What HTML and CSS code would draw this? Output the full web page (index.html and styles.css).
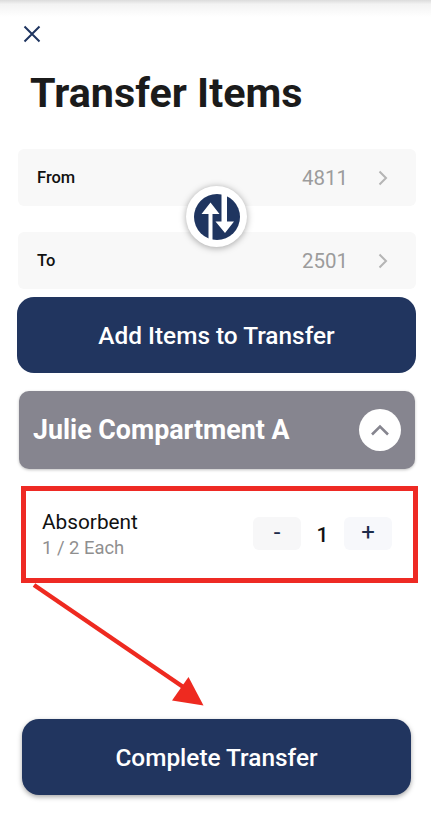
FILE: index.html
```html
<!DOCTYPE html>
<html lang="en">
<head>
    <meta charset="UTF-8">
    <meta name="viewport" content="width=device-width, initial-scale=1.0">
    <title>Transfer Items</title>
    <link rel="stylesheet" href="styles.css">
</head>
<body>
    <div class="screen">
        <div class="top-fade"></div>
        <button class="close" aria-label="Close">
            <svg width="18" height="18" viewBox="0 0 18 18"><path d="M1.5 1.5L16.5 16.5M16.5 1.5L1.5 16.5" stroke="#1f3560" stroke-width="2" fill="none"/></svg>
        </button>
        <h1>Transfer Items</h1>

        <div class="locations">
            <div class="location">
                <span class="location-label">From</span>
                <span class="location-value">4811</span>
                <svg class="chevron" width="10" height="16" viewBox="0 0 10 16"><path d="M1.5 1.5L8 8L1.5 14.5" stroke="#b5b5b5" stroke-width="2" fill="none"/></svg>
            </div>
            <div class="location">
                <span class="location-label">To</span>
                <span class="location-value">2501</span>
                <svg class="chevron" width="10" height="16" viewBox="0 0 10 16"><path d="M1.5 1.5L8 8L1.5 14.5" stroke="#b5b5b5" stroke-width="2" fill="none"/></svg>
            </div>
            <div class="swap">
                <svg width="46" height="46" viewBox="0 0 46 46">
                    <circle cx="23" cy="23" r="23" fill="#1f3560"/>
                    <path d="M14.500 46V20H7.500L16.500 8.500L25.500 20H18.500V46Z" fill="#fff"/>
                    <path d="M27.500 0V27.500H21.500L31 39L40 27.500H33V0Z" fill="#fff"/>
                </svg>
            </div>
        </div>

        <button class="primary add-items">Add Items to Transfer</button>

        <div class="compartment">
            <span>Julie Compartment A</span>
            <div class="collapse">
                <svg width="20" height="12" viewBox="0 0 20 12"><path d="M2 10.500L10 2.500L18 10.500" stroke="#86858f" stroke-width="2.600" fill="none"/></svg>
            </div>
        </div>

        <div class="item">
            <div class="item-info">
                <div class="item-name">Absorbent</div>
                <div class="item-count">1 / 2 Each</div>
            </div>
            <div class="stepper">
                <button class="step">-</button>
                <span class="qty">1</span>
                <button class="step plus">+</button>
            </div>
        </div>

        <button class="primary complete">Complete Transfer</button>

        <!-- annotation arrow over the page -->
        <svg class="arrow" width="431" height="818" viewBox="0 0 431 818">
            <path d="M34 585L192 693" stroke="#ee2a20" stroke-width="4.500" fill="none"/>
            <path d="M188.500 677L203.500 705.500L172 700.500Z" fill="#ee2a20"/>
        </svg>
    </div>
</body>
</html>
```

FILE: styles.css
```css
* {
    box-sizing: border-box;
}

body {
    margin: 0;
    background-color: #fff;
    font-family: Roboto, Arial, sans-serif;
}

button {
    font-family: inherit;
    border: none;
    cursor: pointer;
}

.screen {
    position: relative;
    width: 431px;
    height: 818px;
    overflow: hidden;
    padding-top: 25px;
}

.top-fade {
    position: absolute;
    top: 0;
    left: 0;
    right: 0;
    height: 17px;
    background: linear-gradient(#dcdcdc, #f3f3f3 25%, #fff);
}

.close {
    display: block;
    position: relative;
    margin-left: 23px;
    padding: 0;
    width: 18px;
    height: 18px;
    background: none;
}

h1 {
    margin: 26px 0 0 30px;
    font-size: 41.3px;
    line-height: 48px;
    font-weight: 700;
    color: #1b1b1b;
}

.locations {
    position: relative;
    margin: 32px 15px 0 18px;
    display: flex;
    flex-direction: column;
    gap: 26px;
}

.location {
    display: flex;
    align-items: center;
    height: 57px;
    padding: 0 28px 0 19px;
    background-color: #f8f8f8;
    border-radius: 6px;
}

.location-label {
    flex: 1;
    font-size: 16.5px;
    font-weight: 500;
    color: #111;
}

.location-value {
    font-size: 20.5px;
    color: #9c9c9c;
    margin-right: 30px;
}

.swap {
    position: absolute;
    left: 168px;
    top: 37px;
    width: 61px;
    height: 61px;
    display: flex;
    align-items: center;
    justify-content: center;
    background-color: #fff;
    border-radius: 50%;
    box-shadow: 0 1px 7px rgba(0, 0, 0, 0.35);
}

.primary {
    display: block;
    color: #fff;
    background-color: #21355f;
    font-size: 24.4px;
    font-weight: 500;
}

.add-items {
    width: 399px;
    height: 76px;
    margin: 8px 0 0 17px;
    border-radius: 17px;
}

.compartment {
    display: flex;
    align-items: center;
    justify-content: space-between;
    width: 396px;
    height: 78px;
    margin: 18px 0 0 19px;
    padding: 0 14px 0 14px;
    color: #fff;
    background-color: #86858f;
    border-radius: 10px;
    font-size: 26.800px;
    font-weight: 700;
    box-shadow: 0 1px 3px rgba(0, 0, 0, 0.25);
}

.collapse {
    display: flex;
    align-items: center;
    justify-content: center;
    width: 42px;
    height: 42px;
    background-color: #fff;
    border-radius: 50%;
}

.item {
    display: flex;
    align-items: center;
    justify-content: space-between;
    width: 397px;
    height: 97px;
    margin: 17px 0 0 21px;
    padding: 0 21px 3px 16px;
    border: 5px solid #ee2a24;
}

.item-info {
    margin-top: 3px;
}

.item-name {
    font-size: 20.800px;
    line-height: 25px;
    color: #111;
}

.item-count {
    font-size: 18.400px;
    line-height: 25px;
    color: #8f8f8f;
}

.stepper {
    display: flex;
    align-items: center;
}

.step {
    width: 48px;
    height: 33px;
    padding: 0 0 3px;
    border-radius: 6px;
    background-color: #f7f7f8;
    color: #1d2c4a;
    font-size: 24px;
}

.step.plus {
    background-color: #f7f8fb;
}

.qty {
    width: 43px;
    padding-top: 3px;
    text-align: center;
    font-size: 21px;
    font-weight: 500;
    color: #111;
}

.complete {
    width: 389px;
    height: 76px;
    margin: 136px 0 0 22px;
    border-radius: 17px;
    box-shadow: 0 2px 5px rgba(0, 0, 0, 0.35);
}

.arrow {
    position: absolute;
    top: 0;
    left: 0;
    pointer-events: none;
}
```
